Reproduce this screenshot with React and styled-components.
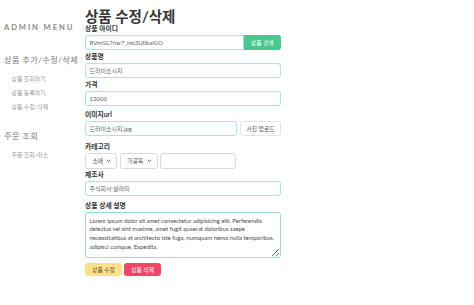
import React from "react";
import styled, { createGlobalStyle } from "styled-components";

const GlobalStyle = createGlobalStyle`
  html, body { margin: 0; padding: 0; background: #fff; }
  body { font-family: "Lato", "Noto Sans CJK KR", sans-serif; color: #4a4a4a; }
  *, *::before, *::after { box-sizing: border-box; }
`;

const Page = styled.div`
  display: flex;
  width: 474px;
  height: 305px;
  overflow: hidden;
`;

const Sidebar = styled.aside`
  width: 85px;
  flex: none;
  padding: 23px 0 0 4px;
  display: flex;
  flex-direction: column;
`;

const MenuTitle = styled.div`
  font-size: 7.6px;
  font-weight: 700;
  letter-spacing: 1.9px;
  line-height: 9px;
  color: #8a8a8a;
`;

const MenuLabel = styled.div`
  font-size: 8.2px;
  line-height: 10px;
  letter-spacing: 0.4px;
  color: #7a7a7a;
  margin-top: ${(p) => p.$top}px;
`;

const MenuList = styled.ul`
  list-style: none;
  margin: 7px 0 0;
  padding: 0 0 0 7.5px;
`;

const MenuItem = styled.li`
  font-size: 5.9px;
  line-height: 14.2px;
  color: #9a9a9a;
`;

const Main = styled.main`
  width: 196px;
  flex: none;
  padding-top: 8.5px;
  display: flex;
  flex-direction: column;
`;

const Title = styled.h1`
  margin: 0 0 0.5px;
  font-size: 14.5px;
  line-height: 16px;
  font-weight: 700;
  color: #363636;
`;

const Field = styled.div`
  margin-bottom: ${(p) => p.$mb}px;
`;

const Label = styled.label`
  display: block;
  font-size: 6.8px;
  font-weight: 700;
  line-height: 7px;
  color: #363636;
  margin-bottom: 3px;
`;

const Row = styled.div`
  display: flex;
  gap: ${(p) => p.$gap || 0}px;
`;

const Input = styled.input`
  display: block;
  width: ${(p) => (p.$w ? `${p.$w}px` : "100%")};
  flex: ${(p) => (p.$w ? "none" : "1")};
  min-width: 0;
  height: ${(p) => p.$h || 15}px;
  margin: 0;
  padding: 0 3.5px;
  border: 1px solid ${(p) => (p.$plain ? "#dbdbdb" : "#a9e7db")};
  border-radius: ${(p) => (p.$attached ? "3px 0 0 3px" : "3px")};
  background: #fff;
  font-family: "Lato", "Noto Sans CJK KR", sans-serif;
  font-size: 6px;
  color: #5f5f5f;
  box-shadow: inset 0 0.5px 1px rgba(10, 10, 10, 0.05);
  outline: none;
`;

const Button = styled.button`
  flex: none;
  width: ${(p) => p.$w}px;
  height: ${(p) => p.$h || 15}px;
  margin: 0;
  padding: 0;
  display: inline-flex;
  align-items: center;
  justify-content: center;
  border: 1px solid ${(p) => p.$border || "transparent"};
  border-radius: ${(p) => (p.$attached ? "0 3px 3px 0" : "3px")};
  background: ${(p) => p.$bg};
  color: ${(p) => p.$fg};
  font-family: "Lato", "Noto Sans CJK KR", sans-serif;
  font-size: 5.8px;
  cursor: pointer;
`;

const Select = styled.div`
  flex: none;
  width: ${(p) => p.$w}px;
  height: 15.6px;
  display: flex;
  align-items: center;
  justify-content: space-between;
  padding: 0 5px 0 6.5px;
  border: 1px solid #dbdbdb;
  border-radius: 3px;
  background: #fff;
  font-size: 5.8px;
  color: #555;
`;

const Chevron = () => (
  <svg width="5" height="4" viewBox="0 0 5 4">
    <path d="M0.7 0.8 L2.5 2.6 L4.3 0.8" fill="none" stroke="#3f4c8c" strokeWidth="0.9" />
  </svg>
);

const TextArea = styled.textarea`
  display: block;
  width: 100%;
  height: 46px;
  margin: 0;
  padding: 4px 3.5px;
  border: 1px solid #94e2d3;
  border-radius: 3px;
  font-family: "Lato", "Noto Sans CJK KR", sans-serif;
  font-size: 5.9px;
  line-height: 8.8px;
  color: #4a4a4a;
  outline: none;
  overflow: hidden;
  box-shadow: inset 0 0.5px 1px rgba(10, 10, 10, 0.05);
`;

const Actions = styled.div`
  display: flex;
  gap: 2.3px;
`;

const description =
  "Lorem ipsum dolor sit amet consectetur adipisicing elit. Perferendis\ndelectus vel sint maxime, amet fugit quaerat doloribus saepe\nnecessitatibus at architecto iste fuga, numquam nemo nulla temporibus,\nadipisci cumque. Expedita.";

export default function App() {
  return (
    <>
      <GlobalStyle />
      <Page>
        <Sidebar>
          <MenuTitle>ADMIN MENU</MenuTitle>
          <MenuLabel $top={23}>상품 추가/수정/삭제</MenuLabel>
          <MenuList>
            <MenuItem>상품 조회하기</MenuItem>
            <MenuItem>상품 등록하기</MenuItem>
            <MenuItem>상품 수정/삭제</MenuItem>
          </MenuList>
          <MenuLabel $top={16}>주문 조회</MenuLabel>
          <MenuList>
            <MenuItem>주문 조회/취소</MenuItem>
          </MenuList>
        </Sidebar>
        <Main>
          <Title>상품 수정/삭제</Title>
          <Field $mb={3}>
            <Label>상품 아이디</Label>
            <Row>
              <Input $attached defaultValue="RVmGL7nw7_mk3UlIbaiGO" />
              <Button $attached $w={37.5} $bg="#48c78e" $fg="#fff">상품 검색</Button>
            </Row>
          </Field>
          <Field $mb={3}>
            <Label>상품명</Label>
            <Input defaultValue="드라이소시지" />
          </Field>
          <Field $mb={5}>
            <Label>가격</Label>
            <Input defaultValue="12000" />
          </Field>
          <Field $mb={7}>
            <Label>이미지url</Label>
            <Row $gap={2.6}>
              <Input defaultValue="드라이소시지.jpg" />
              <Button $w={41} $bg="#fff" $fg="#555" $border="#e3e3e3">사진 업로드</Button>
            </Row>
          </Field>
          <Field $mb={2}>
            <Label>카테고리</Label>
            <Row $gap={2.6}>
              <Select $w={32}>
                <span>소매</span>
                <Chevron />
              </Select>
              <Select $w={38}>
                <span>가공육</span>
                <Chevron />
              </Select>
              <Input $plain $w={75.7} $h={15.6} defaultValue="" />
            </Row>
          </Field>
          <Field $mb={6}>
            <Label>제조사</Label>
            <Input defaultValue="주식회사 살라미" />
          </Field>
          <Field $mb={5}>
            <Label>상품 상세 설명</Label>
            <TextArea defaultValue={description} />
          </Field>
          <Actions>
            <Button $w={37} $h={13.3} $bg="#ffe08a" $fg="rgba(0,0,0,0.7)">상품 수정</Button>
            <Button $w={36.7} $h={13.3} $bg="#f14668" $fg="#fff">상품 삭제</Button>
          </Actions>
        </Main>
      </Page>
    </>
  );
}
